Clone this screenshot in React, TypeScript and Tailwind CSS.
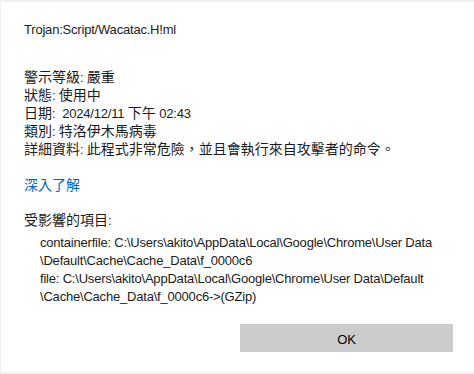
const cjk = { fontFamily: '"Noto Sans CJK TC", sans-serif' };

function L({ children }: { children: React.ReactNode }) {
  return (
    <span
      className="text-[13px] leading-none tracking-[-0.2px]"
      style={{ fontFamily: '"Liberation Sans", Arial, sans-serif' }}
    >
      {children}
    </span>
  );
}

function Row({ children, className = "" }: { children: React.ReactNode; className?: string }) {
  return <div className={"h-[18px] leading-[18px] " + className}>{children}</div>;
}

export default function App() {
  return (
    <div className="w-[474px] h-[374px] bg-[#f0f0f0] overflow-hidden" style={cjk}>
      <div className="h-[370px] mt-[2px] ml-px bg-white flex flex-col text-[14px] leading-[18px] text-[#1b1b1b] whitespace-nowrap">
        <Row className="pl-[23px] mt-[17px]">
          <L>Trojan:Script/Wacatac.H!ml</L>
        </Row>

        <div className="pl-[23px] mt-[30px] flex flex-col">
          <Row>警示等級<L>: </L>嚴重</Row>
          <Row>狀態<L>: </L>使用中</Row>
          <Row>日期<L>:&nbsp; 2024/12/11 </L>下午<L> 02:43</L></Row>
          <Row>類別<L>: </L>特洛伊木馬病毒</Row>
          <Row>詳細資料<L>: </L>此程式非常危險，並且會執行來自攻擊者的命令。</Row>
        </div>

        <Row className="pl-[23px] mt-[18px] text-[#0067c0]">深入了解</Row>

        <Row className="pl-[23px] mt-[17px]">受影響的項目<L>:</L></Row>
        <div className="pl-[39px] mt-[4px] flex flex-col">
          <Row><L>containerfile: C:\Users\akito\AppData\Local\Google\Chrome\User Data</L></Row>
          <Row><L>\Default\Cache\Cache_Data\f_0000c6</L></Row>
          <Row><L>file: C:\Users\akito\AppData\Local\Google\Chrome\User Data\Default</L></Row>
          <Row><L>\Cache\Cache_Data\f_0000c6-&gt;(GZip)</L></Row>
        </div>

        <div className="flex justify-end pr-[21px] mt-auto mb-[20px]">
          <button className="w-[213px] h-[28px] bg-[#cccccc] text-black">
            <L>OK</L>
          </button>
        </div>
      </div>
    </div>
  );
}
